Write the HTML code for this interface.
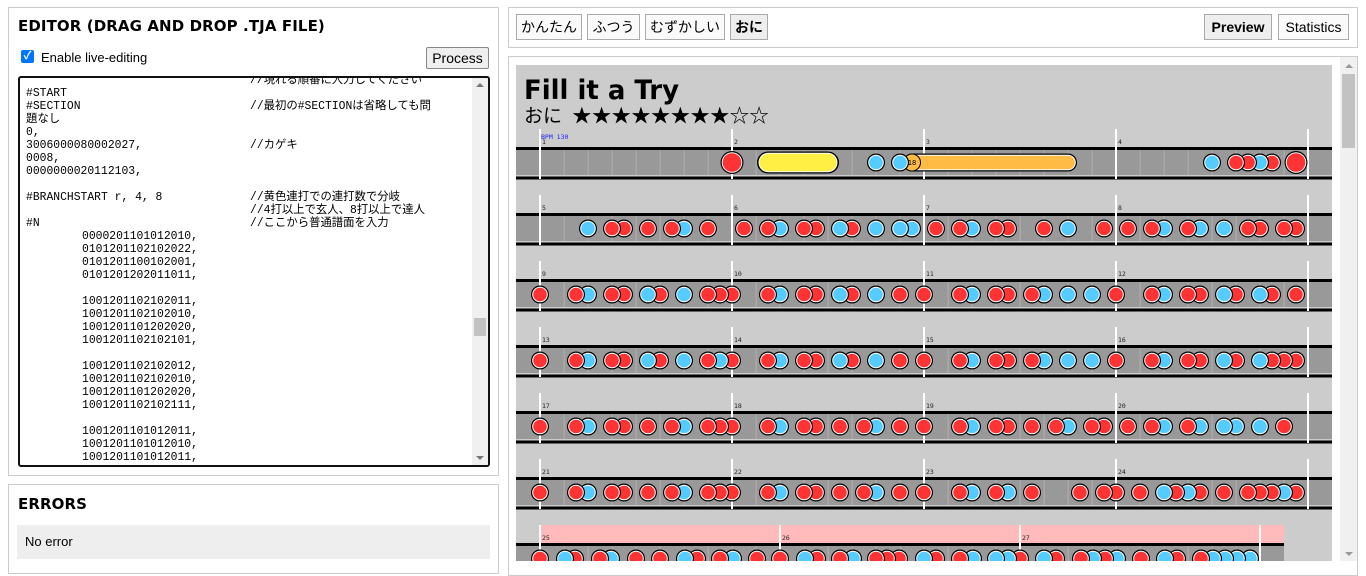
<!DOCTYPE html>
<html><head><meta charset="utf-8">
<style>
*{box-sizing:border-box;margin:0;padding:0}
body{width:1366px;height:561px;overflow:hidden;background:#fff;font-family:"Liberation Sans","Noto Sans CJK JP",sans-serif;position:relative;color:#000}
.box{position:absolute;border:1px solid #ccc;background:#fff}
h2{position:absolute;font-family:"DejaVu Sans",sans-serif;font-size:15px;font-weight:bold;letter-spacing:0.1px}
.btn{position:absolute;border:1px solid #aaa;background:#fafafa;font-size:14px;height:26px;line-height:24px;text-align:center;font-family:"Liberation Sans","Noto Sans CJK JP",sans-serif}
.ta{position:absolute;left:18px;top:76px;width:472px;height:391px;border:2px solid #111;border-radius:3px;overflow:hidden;background:#fff}
.ln{position:absolute;font-family:"Liberation Mono","Noto Sans CJK JP",monospace;font-size:11.6px;line-height:13px;white-space:pre;transform:scaleX(0.98);transform-origin:left}
</style></head><body>
<div class="box" style="left:8px;top:7px;width:491px;height:469px"></div>
<h2 style="left:18px;top:17px">EDITOR (DRAG AND DROP .TJA FILE)</h2>
<div style="position:absolute;left:21px;top:50px;width:13px;height:13px;background:#0075ff;border-radius:2px;color:#fff;font-size:11px;line-height:13px;text-align:center;font-weight:bold">✓</div>
<div style="position:absolute;left:41px;top:50px;font-size:13px">Enable live-editing</div>
<div class="btn" style="left:426px;top:47px;width:63px;height:22px;line-height:20px;background:#efefef;border-color:#888;border-radius:2px">Process</div>
<div class="ta" id="ta">
<div style="position:absolute;right:0;top:0;width:16px;height:100%;background:#f0f0f0"></div>
<div style="position:absolute;right:2px;top:240px;width:12px;height:18px;background:#c2c2c2"></div>
<div style="position:absolute;right:4px;top:5px;width:0;height:0;border:4px solid transparent;border-bottom:4px solid #777;border-top:0"></div>
<div style="position:absolute;right:4px;bottom:5px;width:0;height:0;border:4px solid transparent;border-top:4px solid #777;border-bottom:0"></div>
</div>
<div class="box" style="left:8px;top:484px;width:491px;height:90px"></div>
<h2 style="left:18px;top:495px">ERRORS</h2>
<div style="position:absolute;left:17px;top:525px;width:473px;height:34px;background:#eee;font-size:13px;line-height:34px;padding-left:8px">No error</div>

<div class="box" style="left:508px;top:7px;width:850px;height:41px"></div>
<div class="btn" style="left:516px;top:14px;width:66px">かんたん</div>
<div class="btn" style="left:587px;top:14px;width:53px">ふつう</div>
<div class="btn" style="left:645px;top:14px;width:80px">むずかしい</div>
<div class="btn" style="left:730px;top:14px;width:38px;background:#eee;font-weight:bold">おに</div>
<div class="btn" style="left:1204px;top:14px;width:68px;background:#eee;font-weight:bold">Preview</div>
<div class="btn" style="left:1278px;top:14px;width:71px">Statistics</div>

<div class="box" style="left:508px;top:56px;width:850px;height:520px"></div>
<div style="position:absolute;left:1340px;top:57px;width:17px;height:504px;background:#f0f0f0"></div>
<div style="position:absolute;left:1342px;top:74px;width:13px;height:74px;background:#c2c2c2"></div>
<div style="position:absolute;left:1345px;top:64px;width:0;height:0;border:4px solid transparent;border-bottom:4px solid #999;border-top:0"></div>
<div style="position:absolute;left:1345px;top:552px;width:0;height:0;border:4px solid transparent;border-top:4px solid #999;border-bottom:0"></div>

<svg id="sv" width="1366" height="561" style="position:absolute;left:0;top:0" xmlns="http://www.w3.org/2000/svg">
<defs><clipPath id="cp"><rect x="516" y="65" width="816" height="496"/></clipPath></defs>
<g clip-path="url(#cp)" id="g">
<rect x="516" y="65" width="816" height="496" fill="#ccc"/>
<text x="524" y="99" font-family="DejaVu Sans,sans-serif" font-weight="bold" font-size="27" textLength="155" lengthAdjust="spacingAndGlyphs">Fill it a Try</text>
<text x="524" y="122" font-family="Liberation Sans,Noto Sans CJK JP,sans-serif" font-size="19">おに</text>
<text x="572" y="122" font-family="Liberation Sans,Noto Sans CJK JP,sans-serif" font-size="19" textLength="197" lengthAdjust="spacingAndGlyphs">★★★★★★★★☆☆</text>
<text x="541" y="139" font-family="DejaVu Sans Mono,monospace" font-size="6.5" fill="#22f">BPM 130</text>
</g></svg>
<script>
(function(){
var ta=document.getElementById('ta');
var L=[["","//現れる順番に入力してください"],["#START",""],["#SECTION","//最初の#SECTIONは省略しても問"],["題なし",""],["0,",""],["3006000080002027,","//カゲキ"],["0008,",""],["0000000020112103,",""],["",""],["#BRANCHSTART r, 4, 8","//黄色連打での連打数で分岐"],["","//4打以上で玄人、8打以上で達人"],["#N","//ここから普通譜面を入力"],
["\t0000201101012010,",""],["\t0101201102102022,",""],["\t0101201100102001,",""],["\t0101201202011011,",""],["",""],
["\t1001201102102011,",""],["\t1001201102102010,",""],["\t1001201101202020,",""],["\t1001201102102101,",""],["",""],
["\t1001201102102012,",""],["\t1001201102102010,",""],["\t1001201101202020,",""],["\t1001201102102111,",""],["",""],
["\t1001201101012011,",""],["\t1001201101012010,",""],["\t1001201101012011,",""],["\t0101201202202010,",""]];
var h='';
L.forEach(function(l,i){var y=-4+i*13;var t=l[0];var x=6;if(t[0]=='\t'){t=t.slice(1);x=62;}
if(t)h+='<div class="ln" style="left:'+x+'px;top:'+y+'px">'+t+'</div>';
if(l[1])h+='<div class="ln" style="left:230px;top:'+y+'px">'+l[1]+'</div>';});
ta.insertAdjacentHTML('afterbegin',h);

var s='';
function lane(k,x0,x1,meas,mw,labels){
 var c=162.5+66*k;
 s+='<rect x="'+x0+'" y="'+(c-12.5)+'" width="'+(x1-x0)+'" height="25" fill="#999"/>';
 for(var x=540;x<x1;x+=24){s+='<rect x="'+(x-0.5)+'" y="'+(c-12.5)+'" width="1.5" height="25" fill="#a9a9a9"/>';}
 s+='<rect x="'+x0+'" y="'+(c-15.5)+'" width="'+(x1-x0)+'" height="3" fill="#000"/>';
 s+='<rect x="'+x0+'" y="'+(c+14)+'" width="'+(x1-x0)+'" height="3" fill="#000"/>';
 for(var m=0;m<=meas;m++){var x=540+m*mw;s+='<rect x="'+(x-1)+'" y="'+(c-33.5)+'" width="2" height="50" fill="#fff"/>';
  if(m<meas)s+='<text x="'+(x+2)+'" y="'+(c-18.5)+'" font-family="DejaVu Sans Mono,monospace" font-size="6.5" fill="#222">'+labels[m]+'</text>';}
}
var notes=[];
function note(k,x,t,r){notes.push([k,x,t,r||9]);}
function pats(k,arr){arr.forEach(function(p,m){for(var i=0;i<16;i++){var ch=p[i];if(ch!='0')note(k,540+m*192+i*12,ch);}});}
function draw(){for(var i=notes.length-1;i>=0;i--){var n=notes[i];var c=162.5+66*n[0];var r=n[3];
 s+='<circle cx="'+n[1]+'" cy="'+c+'" r="'+r+'" fill="#000"/><circle cx="'+n[1]+'" cy="'+c+'" r="'+(r-1.2)+'" fill="#fff"/><circle cx="'+n[1]+'" cy="'+c+'" r="'+(r-2.2)+'" fill="'+(n[2]=='1'?'#f33':'#5cf')+'"/>';}
 notes=[];}
for(var k=0;k<6;k++)lane(k,516,1332,4,192,[4*k+1,4*k+2,4*k+3,4*k+4]);
s+='<rect x="540" y="525" width="744" height="20" fill="#fbb"/>';
lane(6,516,1284,3,240,[25,26,27]);
var c=162.5;
s+='<rect x="757" y="'+(c-11)+'" width="82" height="22" rx="11" fill="#000"/><rect x="758.5" y="'+(c-9.7)+'" width="79" height="19.4" rx="9.7" fill="#fff"/><rect x="759.5" y="'+(c-8.7)+'" width="77" height="17.4" rx="8.7" fill="#fe4"/>';
s+='<rect x="903" y="'+(c-9)+'" width="174" height="18" rx="9" fill="#000"/><rect x="904.2" y="'+(c-7.8)+'" width="171.6" height="15.6" rx="7.8" fill="#fff"/><rect x="905.2" y="'+(c-6.8)+'" width="169.6" height="13.6" rx="6.8" fill="#fb4"/>';
s+='<circle cx="912" cy="'+c+'" r="9" fill="#000"/><circle cx="912" cy="'+c+'" r="8" fill="#fb4"/><text x="912" y="'+(c+2.5)+'" font-family="DejaVu Sans Mono,monospace" font-size="7" text-anchor="middle">18</text>';
note(0,876,'2');note(0,900,'2');draw();
note(0,732,'1',11.5);note(0,1212,'2');note(0,1236,'1');note(0,1248,'1');note(0,1260,'2');note(0,1272,'1');note(0,1296,'1',11.5);
pats(1,["0000201101012010","0101201102102022","0101201100102001","0101201202011011"]);
pats(2,["1001201102102011","1001201102102010","1001201101202020","1001201102102101"]);
pats(3,["1001201102102012","1001201102102010","1001201101202020","1001201102102111"]);
pats(4,["1001201101012011","1001201101012010","1001201101012011","0101201202202010"]);
pats(5,["1001201101012011","1001201101012010","1001201201000101","1010212101011121"]);
var r7=[[55,1],[100,2],[120,1],[165,1],[185,2],[230,1],[275,1],[320,2],[342,1],[385,1],[408,2],[452,1],[495,1],[540,2],[562,1],[605,1],[628,2],[670,1],[690,1],[712,1],[758,2],[780,1],[825,1],[848,2],[890,2],[912,2],[935,1],[978,2],[1000,1],[1045,1],[1068,2],[1090,1],[1112,2],[1155,1],[1200,2],[1222,1],[1265,1],[1288,2],[1310,2],[1332,2],[1355,2]];
r7.forEach(function(a){note(6,Math.round(540+(a[0]-55)*0.546),String(a[1]));});
draw();
document.getElementById('g').insertAdjacentHTML('beforeend',s);
})();
</script>
</body></html>
